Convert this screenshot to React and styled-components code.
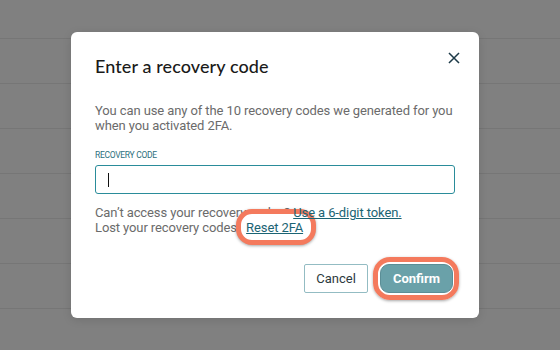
import React from 'react';
import styled, { createGlobalStyle } from 'styled-components';

const GlobalStyle = createGlobalStyle`
  html, body {
    margin: 0;
    padding: 0;
    background: #808080;
  }
  * {
    box-sizing: border-box;
  }
`;

const Backdrop = styled.div`
  width: 560px;
  height: 350px;
  overflow: hidden;
  display: flex;
  align-items: flex-start;
  padding: 32px 0 0 71px;
  background-color: #808080;
  background-image: repeating-linear-gradient(
    to bottom,
    transparent 0px,
    transparent 37px,
    #767676 37px,
    #767676 38px,
    transparent 38px,
    transparent 45px
  );
  background-position: 0 1px;
`;

const Modal = styled.div`
  width: 408px;
  height: 286px;
  background: #ffffff;
  border-radius: 6px;
  box-shadow: 0 2px 10px rgba(0, 0, 0, 0.12);
  padding: 0 24px;
  display: flex;
  flex-direction: column;
  font-family: Roboto, 'Liberation Sans', sans-serif;
`;

const Header = styled.div`
  display: flex;
  justify-content: space-between;
  align-items: flex-start;
  padding-top: 23px;
`;

const Title = styled.h2`
  margin: 0;
  font-family: Lato, 'Noto Sans', sans-serif;
  font-size: 18px;
  font-weight: 500;
  line-height: 22px;
  color: #1a1a1a;
  letter-spacing: 0.1px;
`;

const CloseButton = styled.button`
  border: none;
  background: none;
  padding: 0;
  margin: -3px -5px 0 0;
  width: 12px;
  height: 12px;
  display: flex;
  cursor: pointer;
`;

const Text = styled.p`
  margin: ${(p) => p.$mt || 0}px 0 0;
  font-size: 13px;
  line-height: 15px;
  color: #6b6b6b;
  letter-spacing: -0.1px;
`;

const Label = styled.label`
  display: block;
  margin-top: 17px;
  font-size: 8.5px;
  line-height: 10px;
  color: #2b6f7c;
  letter-spacing: -0.3px;
  text-transform: uppercase;
`;

const Input = styled.div`
  margin-top: 5px;
  width: 360px;
  height: 29px;
  border: 1px solid #2a8c9a;
  border-radius: 3px;
  display: flex;
  align-items: center;
  padding-left: 12px;
`;

const Caret = styled.span`
  width: 1px;
  height: 14px;
  background: #111;
`;

const Link = styled.a`
  color: #1b6474;
  text-decoration: underline;
  text-underline-offset: 1px;
  font-weight: 400;
  position: relative;
  z-index: 2;
`;

const Highlight = styled.span`
  position: relative;
  display: inline-block;

  &::before {
    content: '';
    position: absolute;
    top: -11px;
    bottom: -10px;
    left: -10px;
    right: -13px;
    border: 5px solid #f47a5d;
    border-radius: 16px;
    background: #ffffff;
    box-shadow: 0 1px 3px rgba(0, 0, 0, 0.35);
    z-index: 1;
  }
`;

const Footer = styled.div`
  margin-top: auto;
  padding-bottom: 25px;
  display: flex;
  justify-content: flex-end;
  align-items: center;
  gap: 12px;
`;

const Button = styled.button`
  height: 29px;
  padding: 0 ${(p) => (p.$primary ? 12 : 11)}px;
  border-radius: ${(p) => (p.$primary ? 9 : 2)}px;
  border: 1px solid ${(p) => (p.$primary ? '#5b8e96' : '#93bcc3')};
  background: ${(p) => (p.$primary ? '#6aa1a9' : '#ffffff')};
  color: ${(p) => (p.$primary ? '#ffffff' : '#2d3a3e')};
  font-family: Roboto, 'Liberation Sans', sans-serif;
  font-size: 13px;
  font-weight: ${(p) => (p.$primary ? 700 : 400)};
  cursor: pointer;
  position: relative;
  z-index: 2;
`;

const Ring = styled.span`
  position: relative;
  display: inline-flex;
  margin-right: 2px;

  &::before {
    content: '';
    position: absolute;
    inset: -7px -6px -7px -7px;
    border: 5px solid #f47a5d;
    border-radius: 17px;
    box-shadow: 0 1px 3px rgba(0, 0, 0, 0.35);
    z-index: 1;
  }
`;

const CloseIcon = () => (
  <svg width="12" height="12" viewBox="0 0 12 12">
    <path d="M1.5 1.5 L10.5 10.5 M10.5 1.5 L1.5 10.5" stroke="#1d3a48" strokeWidth="1.5" strokeLinecap="square" />
  </svg>
);

const App = () => {
  return (
    <>
      <GlobalStyle />
      <Backdrop>
        <Modal>
          <Header>
            <Title>Enter a recovery code</Title>
            <CloseButton aria-label="Close">
              <CloseIcon />
            </CloseButton>
          </Header>
          <Text $mt={26}>
            You can use any of the 10 recovery codes we generated for you
            <br />
            when you activated 2FA.
          </Text>
          <Label>Recovery code</Label>
          <Input>
            <Caret />
          </Input>
          <Text $mt={11}>
            Can’t access your recovery codes? <Link>Use a 6-digit token.</Link>
            <br />
            Lost your recovery codes?{' '}
            <Highlight>
              <Link>Reset 2FA</Link>
            </Highlight>
          </Text>
          <Footer>
            <Button>Cancel</Button>
            <Ring>
              <Button $primary>Confirm</Button>
            </Ring>
          </Footer>
        </Modal>
      </Backdrop>
    </>
  );
};

export default App;
